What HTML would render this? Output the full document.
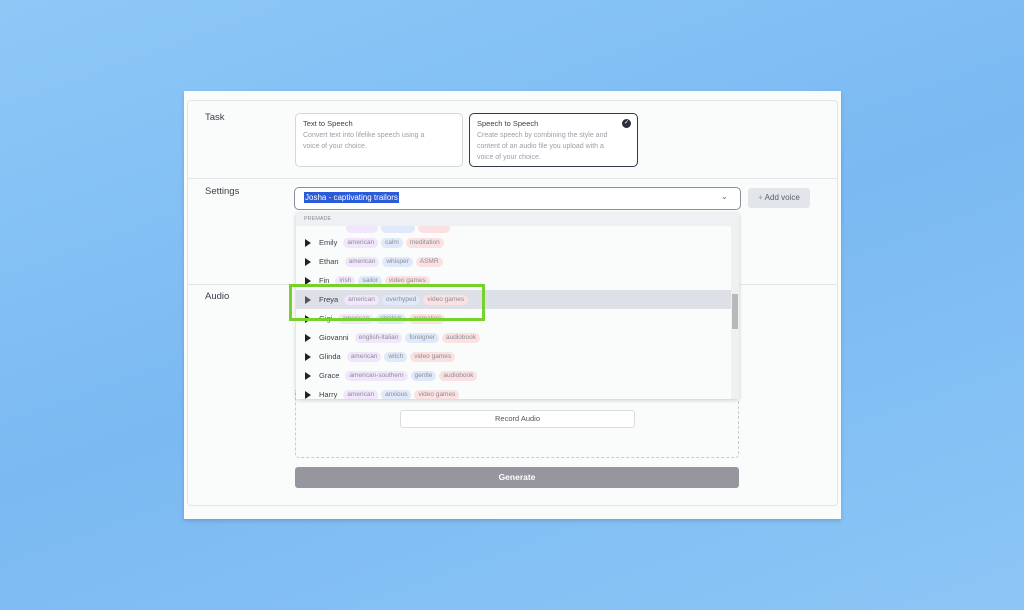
<!DOCTYPE html>
<html><head><style>
*{box-sizing:border-box;margin:0;padding:0}
body{width:1024px;height:610px;overflow:hidden;font-family:"Liberation Sans",sans-serif;background:linear-gradient(160deg,#8ec8f7 0%,#7ab9f2 50%,#8cc6f6 100%);position:relative}
.abs{position:absolute}
.panel{left:184px;top:91px;width:657px;height:428px;background:#fafbfb;box-shadow:0 2px 4px rgba(0,0,0,.15)}
.card{left:187px;top:100px;width:651px;height:406px;border:1px solid #e3e5e8;border-radius:4px;background:#fafbfb}
.lbl{font-size:9.5px;color:#3a3f4a}
.opt{border:1px solid #d4d6db;border-radius:5px;padding:5px 7px;font-size:7.5px;color:#3a3f4a;background:#fff}
.opt p{color:#9a9ea6;line-height:11px;margin-top:2px;font-size:7px}
.tag{display:inline-block;height:10px;line-height:10px;padding:0 4px;border-radius:5px;font-size:6.5px;color:#8a8e96;margin-right:3px}
.p{background:#f1e6fb}.b{background:#dfe9f9}.r{background:#fbe1e1}
.row{position:absolute;left:0;width:435px;height:19px;font-size:7.5px;color:#3a3f4a;padding-left:9px;display:flex;align-items:center}
.row .tri{width:0;height:0;border-left:6px solid #222;border-top:4px solid transparent;border-bottom:4px solid transparent;margin-right:8px}
.row .n{margin-right:6px}
</style></head><body>
<div class="abs panel"></div>
<div class="abs card"></div>
<div class="abs" style="left:188px;top:178px;width:650px;height:1px;background:#e3e5e8"></div>
<div class="abs" style="left:188px;top:284px;width:650px;height:1px;background:#e3e5e8"></div>
<div class="abs lbl" style="left:205px;top:112px">Task</div>
<div class="abs lbl" style="left:205px;top:186px">Settings</div>
<div class="abs lbl" style="left:205px;top:291px">Audio</div>
<div class="abs opt" style="left:295px;top:113px;width:168px;height:54px">Text to Speech<p>Convert text into lifelike speech using a<br>voice of your choice.</p></div>
<div class="abs opt" style="left:469px;top:113px;width:169px;height:54px;border:1.5px solid #333a48">Speech to Speech<p>Create speech by combining the style and<br>content of an audio file you upload with a<br>voice of your choice.</p>
<div class="abs" style="right:6px;top:5px;width:9px;height:9px;border-radius:50%;background:#2a2f3a;color:#fff;font-size:6px;line-height:9px;text-align:center">✓</div></div>
<div class="abs" style="left:294px;top:187px;width:447px;height:23px;border:1px solid #8a8e99;border-radius:5px;background:#fff"></div>
<div class="abs" style="left:304px;top:192px;height:11px;background:#2b5bd8;color:#fff;font-size:8px;line-height:11px;padding:0 1px">Josha - captivating trailors</div>
<div class="abs" style="left:721px;top:192px;font-size:8px;color:#666">⌄</div>
<div class="abs" style="left:748px;top:188px;width:62px;height:20px;background:#e2e5ea;border-radius:3px;font-size:8px;color:#5a5f6a;line-height:20px;text-align:center"><span style="color:#999">+</span> Add voice</div>
<div class="abs" style="left:295px;top:390px;width:444px;height:68px;border:1px dashed #c8cbd0;border-top:none;border-radius:0 0 4px 4px"></div>
<div class="abs" style="left:400px;top:410px;width:235px;height:18px;border:1px solid #d9dce0;border-radius:3px;background:#fff;font-size:7.5px;color:#555;line-height:16px;text-align:center">Record Audio</div>
<div class="abs" style="left:295px;top:467px;width:444px;height:21px;background:#97969f;border-radius:3px;color:#fff;font-size:8.5px;font-weight:bold;line-height:21px;text-align:center">Generate</div>
<div class="abs" style="left:296px;top:213px;width:443px;height:186px;background:#fafbfb;box-shadow:0 1px 4px rgba(0,0,0,.2);overflow:hidden">
<div class="abs" style="left:50px;top:7px"><span class="tag p" style="width:32px"></span><span class="tag b" style="width:34px"></span><span class="tag r" style="width:32px"></span></div>
<div class="abs" style="left:0;top:0;width:443px;height:13px;background:#eef0f3;font-size:5.5px;color:#8a8e96;line-height:13px;padding-left:8px">PREMADE</div>
<div class="abs" style="left:435px;top:0;width:8px;height:186px;background:#f0f0f0"></div>
<div class="abs" style="left:436px;top:81px;width:6px;height:35px;background:#b9b9b9"></div>
<div class="row" style="top:20px"><span class="tri"></span><span class="n">Emily</span><span class="tag p">american</span><span class="tag b">calm</span><span class="tag r">meditation</span></div>
<div class="row" style="top:39px"><span class="tri"></span><span class="n">Ethan</span><span class="tag p">american</span><span class="tag b">whisper</span><span class="tag r">ASMR</span></div>
<div class="row" style="top:58px"><span class="tri"></span><span class="n">Fin</span><span class="tag p">irish</span><span class="tag b">sailor</span><span class="tag r">video games</span></div>
<div class="row" style="top:77px;background:#dde0e6"><span class="tri" style="border-left-color:#555"></span><span class="n">Freya</span><span class="tag p">american</span><span class="tag b">overhyped</span><span class="tag r">video games</span></div>
<div class="row" style="top:96px"><span class="tri"></span><span class="n">Gigi</span><span class="tag p">american</span><span class="tag b">childish</span><span class="tag r">animation</span></div>
<div class="row" style="top:115px"><span class="tri"></span><span class="n">Giovanni</span><span class="tag p">english-italian</span><span class="tag b">foreigner</span><span class="tag r">audiobook</span></div>
<div class="row" style="top:134px"><span class="tri"></span><span class="n">Glinda</span><span class="tag p">american</span><span class="tag b">witch</span><span class="tag r">video games</span></div>
<div class="row" style="top:153px"><span class="tri"></span><span class="n">Grace</span><span class="tag p">american-southern</span><span class="tag b">gentle</span><span class="tag r">audiobook</span></div>
<div class="row" style="top:172px"><span class="tri"></span><span class="n">Harry</span><span class="tag p">american</span><span class="tag b">anxious</span><span class="tag r">video games</span></div>
</div>
<div class="abs" style="left:289px;top:284px;width:196px;height:37px;border:3px solid #76d12c"></div>
</body></html>
